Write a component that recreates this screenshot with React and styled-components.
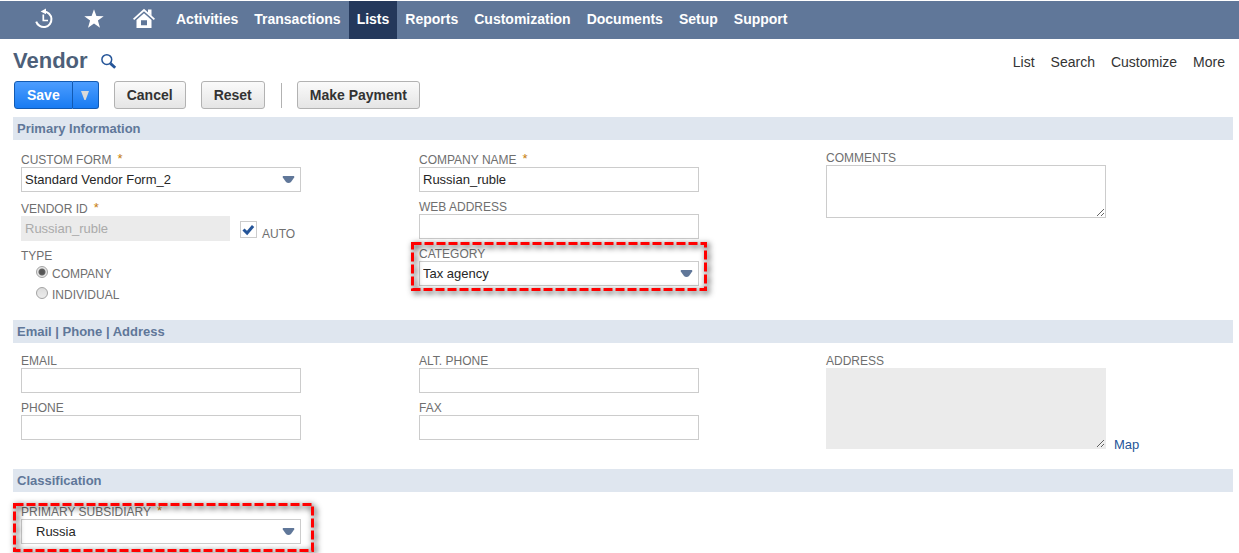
import React from 'react';
import styled, { createGlobalStyle, css } from 'styled-components';

const GlobalStyle = createGlobalStyle`
  * {
    box-sizing: border-box;
  }

  body {
    margin: 0;
    background: #fff;
    color: #262626;
    font-family: Arial, 'Liberation Sans', sans-serif;
    font-size: 13px;
  }

  input, select, textarea, button {
    font-family: inherit;
  }
`;

const Nav = styled.nav`
  display: flex;
  height: 38px;
  margin-top: 1px;
  padding-left: 18px;
  background: #607799;
`;

const NavIcon = styled.a`
  display: flex;
  justify-content: center;
  width: 50px;
  padding: 6px 0 0 2px;
`;

const NavLink = styled.a`
  padding: 0 8px;
  color: #fff;
  font-size: 14px;
  font-weight: bold;
  line-height: 37px;
  text-decoration: none;
  background: ${props => (props.$active ? '#24385b' : 'transparent')};
`;

const Page = styled.main`
  padding: 0 6px 0 13px;
`;

const PageHeader = styled.header`
  display: flex;
  align-items: center;
  height: 42px;
  padding-right: 8px;
`;

const Title = styled.h1`
  margin: 0;
  padding-top: 2px;
  color: #4d5f79;
  font-size: 22px;
  line-height: 40px;
`;

const SearchButton = styled.button`
  display: flex;
  margin-left: 12px;
  padding: 3px 0 0;
  border: 0;
  background: none;
`;

const PageLinks = styled.div`
  display: flex;
  gap: 16px;
  margin-left: auto;
  padding-top: 4px;
`;

const PageLink = styled.a`
  color: #333;
  font-size: 14px;
  text-decoration: none;
`;

const Toolbar = styled.div`
  display: flex;
  align-items: center;
  gap: 15px;
  margin-bottom: 8px;
  padding-left: 1px;
`;

const buttonBase = css`
  height: 28px;
  font-size: 14px;
  font-weight: bold;
`;

const Button = styled.button`
  ${buttonBase}
  padding: 0 12px;
  border: 1px solid #b2b2b2;
  border-radius: 3px;
  color: #333;
  background: linear-gradient(#fafafa, #e5e5e5);
`;

const SplitButton = styled.div`
  display: flex;
`;

const SaveButton = styled.button`
  ${buttonBase}
  padding: 0 12px;
  border: 1px solid #125ab2;
  border-radius: 3px 0 0 3px;
  color: #fff;
  background: linear-gradient(#4c9dff, #187bf2);
`;

const SaveMenuButton = styled(SaveButton)`
  display: flex;
  align-items: center;
  justify-content: center;
  width: 26px;
  padding: 0;
  border-left: 0;
  border-radius: 0 3px 3px 0;
`;

const Separator = styled.span`
  width: 1px;
  height: 25px;
  margin-left: 1px;
  background: #b2b2b2;
`;

const SectionTitle = styled.h2`
  margin: 0;
  padding: 0 4px;
  color: #607799;
  background: #dfe6ef;
  font-size: 13px;
  line-height: 23px;
`;

const Columns = styled.div`
  display: grid;
  grid-template-columns: 398fr 407fr 407fr;
  align-items: start;
  padding: 10px 0 ${props => (props.$last ? '9px' : '15px')} 8px;
`;

const Column = styled.div`
  display: flex;
  flex-direction: column;
  gap: 7px;
`;

const FieldBox = styled.div`
  position: relative;
  width: 280px;
`;

const Label = styled.label`
  display: block;
  height: ${props => (props.$required ? '17px' : '15px')};
  padding-top: ${props => (props.$required ? '4px' : '2px')};
  color: #6f6f6f;
  font-size: 12px;
  line-height: 13px;
`;

const Required = styled.span`
  margin-left: 6px;
  color: #c67c0c;
  font-size: 13px;
  line-height: 9px;
  vertical-align: 1px;
`;

const controlBase = css`
  display: block;
  width: 100%;
  margin: 0;
  border: 1px solid #ccc;
  border-radius: 0;
  outline: 0;
  color: #262626;
  background: #fff;
  font-size: 13px;
`;

const TextInput = styled.input`
  ${controlBase}
  height: 25px;
  padding: 0 3px;

  &:disabled {
    width: 209px;
    border-color: #ebebeb;
    color: #aaa;
    background: #ebebeb;
  }
`;

const TextArea = styled.textarea`
  ${controlBase}
  height: ${props => (props.readOnly ? '81px' : '53px')};
  padding: 3px;

  &:read-only {
    border-color: #ebebeb;
    background: #ebebeb;
  }
`;

const SelectBox = styled.div`
  display: grid;
  align-items: center;

  > * {
    grid-area: 1 / 1;
  }

  > svg {
    justify-self: end;
    margin-right: 6px;
    pointer-events: none;
  }
`;

const SelectControl = styled.select`
  ${controlBase}
  appearance: none;
  height: 25px;
  padding: 0 24px 0 ${props => (props.$indent ? '14px' : '3px')};
`;

const VendorIdRow = styled.div`
  display: flex;
  gap: 10px;
`;

const AutoLabel = styled.label`
  display: flex;
  gap: 5px;
  height: 25px;
  padding-top: 5px;
  color: #6f6f6f;
  font-size: 12px;
  line-height: 26px;
`;

const CheckBoxWrap = styled.span`
  display: grid;
  height: 17px;

  > * {
    grid-area: 1 / 1;
  }

  > svg {
    pointer-events: none;
  }
`;

const CheckBox = styled.input`
  appearance: none;
  width: 17px;
  height: 17px;
  margin: 0;
  border: 1px solid #ccc;
  background: #fff;
`;

const RadioGroup = styled.fieldset`
  min-width: 0;
  margin: 0;
  padding: 0;
  border: 0;
  color: #6f6f6f;
  font-size: 12px;
  line-height: 13px;
`;

const Legend = styled.legend`
  padding: 2px 0 0;
`;

const RadioLabel = styled.label`
  display: flex;
  gap: 4px;
  height: 21px;
  padding-left: 15px;
  line-height: 23px;
`;

const Radio = styled.input`
  appearance: none;
  width: 12px;
  height: 12px;
  margin: 3px 0 0;
  border: 1px solid #a3a3a3;
  border-radius: 50%;
  background: linear-gradient(#dcdcdc, #ececec);

  &:checked {
    background: radial-gradient(circle, #555 0 2px, #666 3px, #e6e6e6 4px);
  }
`;

const AddressRow = styled.div`
  display: flex;
`;

const AddressField = styled(FieldBox)`
  flex: none;
  margin-bottom: 5px;
`;

const MapLink = styled.a`
  align-self: flex-end;
  margin-left: 8px;
  color: #255599;
  line-height: 18px;
  text-decoration: none;
`;

const HighlightFrame = styled.svg`
  position: absolute;
  top: ${props => props.$inset[0]}px;
  left: ${props => props.$inset[3]}px;
  width: calc(100% - ${props => props.$inset[1] + props.$inset[3]}px);
  height: calc(100% - ${props => props.$inset[0] + props.$inset[2]}px);
  overflow: visible;
  pointer-events: none;
  filter: drop-shadow(2px 2px 3px rgba(0, 0, 0, 0.9));

  rect {
    width: calc(100% - 3px);
    height: calc(100% - 3px);
    fill: none;
    stroke: #f00;
    stroke-width: 3px;
    stroke-dasharray: 9 3;
  }
`;

const Highlight = ({ inset }) => (
  <HighlightFrame $inset={inset} aria-hidden="true">
    <rect x="1.5" y="1.5" />
  </HighlightFrame>
);

const Field = ({ id, label, required, highlight, children }) => (
  <FieldBox>
    <Label htmlFor={id} $required={required}>
      {label}
      {required && <Required>*</Required>}
    </Label>
    {children}
    {highlight && <Highlight inset={highlight} />}
  </FieldBox>
);

const TextField = ({ id, label, required, value = '' }) => (
  <Field id={id} label={label} required={required}>
    <TextInput id={id} type="text" defaultValue={value} />
  </Field>
);

const SelectField = ({ id, label, required, value, indent, highlight }) => (
  <Field id={id} label={label} required={required} highlight={highlight}>
    <SelectBox>
      <SelectControl id={id} $indent={indent}>
        <option>{value}</option>
      </SelectControl>
      <svg width="13" height="9" viewBox="0 0 13 9">
        <path
          d="M1.2 1h10.6q1 .6.4 1.6L9 7q-1 1-2.5 1T4 7L.8 2.6Q.2 1.6 1.2 1z"
          fill="#607799"
        />
      </svg>
    </SelectBox>
  </Field>
);

const HistoryIcon = () => (
  <svg width="22" height="24" viewBox="0 0 22 24" fill="none" stroke="#fff">
    <path d="M11 4.5A7.8 7.8 0 1 1 3.2 14.6" strokeWidth="2" />
    <path d="M7.6 4.4L13 1.6v5.6z" fill="#fff" stroke="none" />
    <path d="M10.3 7.5v6H15" strokeWidth="1.7" />
  </svg>
);

const StarIcon = () => (
  <svg width="22" height="24" viewBox="0 0 22 24" fill="#fff">
    <path d="M11 2.3l2.4 6.7 7.3.2-5.8 4.4 2.1 7.1-6-4.1-6 4.1 2.1-7.1L1.3 9.2l7.3-.2z" />
  </svg>
);

const HomeIcon = () => (
  <svg width="24" height="24" viewBox="0 0 24 24" fill="#fff">
    <path d="M16 2.5h3.5v6.5L16 5.6z" />
    <path
      d="M1.6 12.4L12 3l10.4 9.4"
      fill="none"
      stroke="#fff"
      strokeWidth="1.8"
    />
    <path
      d="M12 6.2l7.5 6.8v8h-15v-8zM9 13.2v5h6v-5z"
      fillRule="evenodd"
    />
  </svg>
);

const SearchIcon = () => (
  <svg width="17" height="17" viewBox="0 0 17 17" fill="none" stroke="#255599">
    <circle cx="6.8" cy="6.6" r="4.9" strokeWidth="1.5" />
    <path d="M10.4 10.4l4.8 4.4" strokeWidth="2.8" />
  </svg>
);

const navLinks = [
  'Activities',
  'Transactions',
  'Lists',
  'Reports',
  'Customization',
  'Documents',
  'Setup',
  'Support',
];

const pageLinks = ['List', 'Search', 'Customize', 'More'];

const App = () => (
  <>
    <GlobalStyle />
    <Nav>
      <NavIcon href="#recent" aria-label="Recent records">
        <HistoryIcon />
      </NavIcon>
      <NavIcon href="#shortcuts" aria-label="Shortcuts">
        <StarIcon />
      </NavIcon>
      <NavIcon href="#home" aria-label="Home">
        <HomeIcon />
      </NavIcon>
      {navLinks.map(name => (
        <NavLink
          key={name}
          href={`#${name.toLowerCase()}`}
          $active={name === 'Lists'}
        >
          {name}
        </NavLink>
      ))}
    </Nav>

    <Page>
      <PageHeader>
        <Title>Vendor</Title>
        <SearchButton type="button" aria-label="Search vendors">
          <SearchIcon />
        </SearchButton>
        <PageLinks>
          {pageLinks.map(name => (
            <PageLink key={name} href={`#vendor-${name.toLowerCase()}`}>
              {name}
            </PageLink>
          ))}
        </PageLinks>
      </PageHeader>

      <Toolbar>
        <SplitButton>
          <SaveButton type="button">Save</SaveButton>
          <SaveMenuButton type="button" aria-label="More save options">
            <svg width="8" height="9" viewBox="0 0 8 9">
              <path d="M0 0h8L4.6 9H3.4z" fill="#d9d9d9" />
            </svg>
          </SaveMenuButton>
        </SplitButton>
        <Button type="button">Cancel</Button>
        <Button type="button">Reset</Button>
        <Separator />
        <Button type="button">Make Payment</Button>
      </Toolbar>

      <section>
        <SectionTitle>Primary Information</SectionTitle>
        <Columns>
          <Column>
            <SelectField
              id="custom-form"
              label="CUSTOM FORM"
              value="Standard Vendor Form_2"
              required
            />
            <Field id="vendor-id" label="VENDOR ID" required>
              <VendorIdRow>
                <TextInput
                  id="vendor-id"
                  type="text"
                  defaultValue="Russian_ruble"
                  disabled
                />
                <AutoLabel>
                  <CheckBoxWrap>
                    <CheckBox type="checkbox" defaultChecked />
                    <svg width="17" height="17" viewBox="0 0 17 17">
                      <path
                        d="M3.5 8.5l3.6 3.6 6-7"
                        fill="none"
                        stroke="#255599"
                        strokeWidth="3"
                      />
                    </svg>
                  </CheckBoxWrap>
                  AUTO
                </AutoLabel>
              </VendorIdRow>
            </Field>
            <RadioGroup>
              <Legend>TYPE</Legend>
              <RadioLabel>
                <Radio type="radio" name="type" defaultChecked />
                COMPANY
              </RadioLabel>
              <RadioLabel>
                <Radio type="radio" name="type" />
                INDIVIDUAL
              </RadioLabel>
            </RadioGroup>
          </Column>
          <Column>
            <TextField
              id="company-name"
              label="COMPANY NAME"
              value="Russian_ruble"
              required
            />
            <TextField id="web-address" label="WEB ADDRESS" />
            <SelectField
              id="category"
              label="CATEGORY"
              value="Tax agency"
              highlight={[-4, -8, -5, -8]}
            />
          </Column>
          <Column>
            <Field id="comments" label="COMMENTS">
              <TextArea id="comments" />
            </Field>
          </Column>
        </Columns>
      </section>

      <section>
        <SectionTitle>Email | Phone | Address</SectionTitle>
        <Columns>
          <Column>
            <TextField id="email" label="EMAIL" />
            <TextField id="phone" label="PHONE" />
          </Column>
          <Column>
            <TextField id="alt-phone" label="ALT. PHONE" />
            <TextField id="fax" label="FAX" />
          </Column>
          <AddressRow>
            <AddressField>
              <Label htmlFor="address">ADDRESS</Label>
              <TextArea id="address" readOnly />
            </AddressField>
            <MapLink href="#map">Map</MapLink>
          </AddressRow>
        </Columns>
      </section>

      <section>
        <SectionTitle>Classification</SectionTitle>
        <Columns $last>
          <SelectField
            id="subsidiary"
            label="PRIMARY SUBSIDIARY"
            value="Russia"
            highlight={[1, -13, -8, -8]}
            required
            indent
          />
        </Columns>
      </section>
    </Page>
  </>
);

export default App;
